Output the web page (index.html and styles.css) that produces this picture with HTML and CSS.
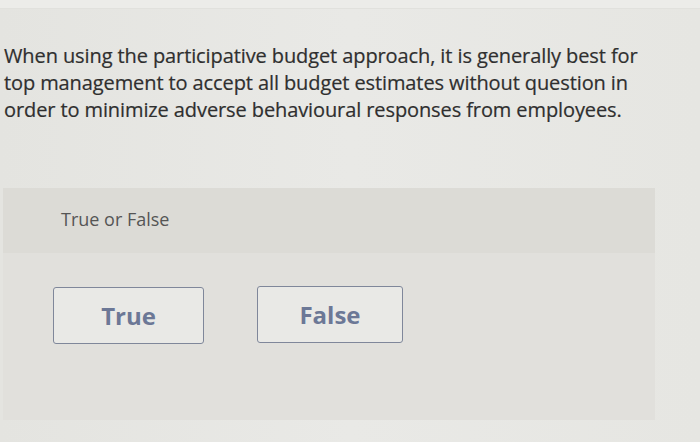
FILE: index.html
```html
<!DOCTYPE html>
<html>
<head>
<meta charset="utf-8">
<link rel="stylesheet" href="styles.css">
</head>
<body>
<div class="page">
  <div class="topline"></div>
  <p class="question">When using the participative budget approach, it is generally best for top management to accept all budget estimates without question in order to minimize adverse behavioural responses from employees.</p>
  <div class="panel">
    <div class="panel-head">True or False</div>
    <div class="panel-body">
      <button class="choice choice-true">True</button>
      <button class="choice choice-false">False</button>
    </div>
  </div>
</div>
</body>
</html>
```

FILE: styles.css
```css
html, body {
  margin: 0;
  padding: 0;
  width: 700px;
  height: 442px;
  overflow: hidden;
  background: #e7e7e3;
}
.page {
  width: 700px;
  height: 442px;
  font-family: "Open Sans", "Liberation Sans", sans-serif;
  background: linear-gradient(90deg, #e4e4e0 0%, #e9e9e6 50%, #e6e6e2 100%);
}
.topline {
  height: 8px;
  background: #ecece9;
  border-bottom: 1px solid #e1e1dd;
}
.question {
  margin: 33px 0 0 4px;
  width: 645px;
  font-size: 20px;
  line-height: 27px;
  color: #2f2f2f;
  letter-spacing: -0.1px;
  -webkit-text-stroke: 0.2px #2f2f2f;
}
.panel {
  margin: 65px 0 0 3px;
  width: 652px;
  height: 232px;
  background: #e1e0dc;
}
.panel-head {
  height: 65px;
  background: #dcdbd6;
  box-sizing: border-box;
  padding: 19px 0 0 58px;
  font-size: 18px;
  color: #555;
}
.panel-body {
  display: flex;
  gap: 53px;
  padding: 34px 0 0 50px;
}
.choice {
  height: 57px;
  background: #e9e9e6;
  border: 1.5px solid #7f879a;
  border-radius: 3px;
  font-family: "Open Sans", "Liberation Sans", sans-serif;
  font-weight: 700;
  font-size: 24px;
  color: #6c7896;
  padding: 0;
}
.choice-true {
  width: 151px;
}
.choice-false {
  width: 146px;
  margin-top: -1px;
}
```
